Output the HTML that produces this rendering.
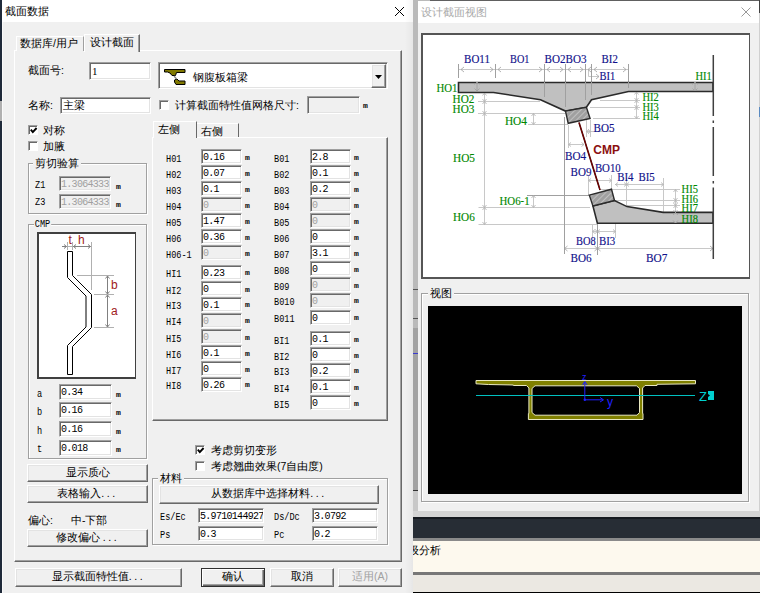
<!DOCTYPE html><html><head><meta charset="utf-8"><style>
*{margin:0;padding:0;box-sizing:border-box}
html,body{width:760px;height:593px;overflow:hidden;background:#f0f0f0;position:relative;font-family:"Liberation Sans",sans-serif;font-size:12px;color:#000}
.t{position:absolute;white-space:nowrap;line-height:16px;font-size:10.5px}
.lbl{position:absolute;white-space:nowrap;line-height:16px;font-family:"Liberation Mono",monospace;font-size:11px;transform:scaleX(0.78);transform-origin:0 0}
.edit{position:absolute;border-style:solid;border-width:1px;border-color:#a0a0a0 #fff #fff #a0a0a0;box-shadow:inset 1px 1px 0 #696969, inset -1px -1px 0 #e3e3e3;overflow:hidden;white-space:nowrap}
.edit>span{position:absolute;left:1px;top:1px}
.mono{font-family:"Liberation Mono",monospace;font-size:10px;letter-spacing:-0.7px}
.ui{font-size:10.5px}
.btn{position:absolute;font-size:10.5px;border-style:solid;border-width:1px;border-color:#fff #696969 #696969 #fff;box-shadow:inset -1px -1px 0 #a0a0a0, inset 1px 1px 0 #e3e3e3;background:#f0f0f0;text-align:center;white-space:nowrap}
.btn>span{position:absolute;left:0;right:0;top:50%;margin-top:-9.5px;line-height:16px}
.def{border-color:#303030;box-shadow:inset 1px 1px 0 #fff, inset -1px -1px 0 #696969, inset -2px -2px 0 #a0a0a0}
.chk{position:absolute;width:10px;height:10px;background:#fff;border-style:solid;border-width:1px;border-color:#a0a0a0 #fff #fff #a0a0a0;box-shadow:inset 1px 1px 0 #696969}
.grp{position:absolute;border:1px solid #a0a0a0;box-shadow:inset 1px 1px 0 #fff, 1px 1px 0 #fff}
.m{position:absolute;font-family:"Liberation Mono",monospace;font-weight:bold;font-size:8px;line-height:10px}
</style></head><body>
<div style="position:absolute;left:413px;top:0px;width:347px;height:593px;background:#bababa"></div>
<div style="position:absolute;left:413px;top:328px;width:5px;height:162px;background:#a2a2a2"></div>
<div style="position:absolute;left:413px;top:490px;width:5px;height:21px;background:#c8c8c8"></div>
<div style="position:absolute;left:413px;top:289px;width:5px;height:1px;background:#555"></div>
<div style="position:absolute;left:413px;top:318px;width:5px;height:1px;background:#555"></div>
<div style="position:absolute;left:413px;top:490px;width:5px;height:1px;background:#333"></div>
<div style="position:absolute;left:413px;top:353px;width:5px;height:1px;background:#3a3ad0"></div>
<div style="position:absolute;left:430px;top:0px;width:330px;height:1px;background:#606060"></div>
<div style="position:absolute;left:413px;top:511px;width:347px;height:6px;background:#d4d4d4"></div>
<div style="position:absolute;left:413px;top:517px;width:347px;height:21px;background:#272d35;border-top:2px solid #161a20"></div>
<div style="position:absolute;left:413px;top:538px;width:347px;height:3px;background:#8a8a8a"></div>
<div style="position:absolute;left:413px;top:541px;width:347px;height:31px;background:#fdf9ee"></div>
<div class="t" style="left:413px;top:542px;width:40px;overflow:hidden"><span style="margin-left:-5px">级分析</span></div>
<div style="position:absolute;left:413px;top:572px;width:347px;height:3px;background:#777"></div>
<div style="position:absolute;left:413px;top:575px;width:347px;height:17px;background:#ebe8e2"></div>
<div style="position:absolute;left:413px;top:592px;width:347px;height:1px;background:#000"></div>
<div style="position:absolute;left:0px;top:0px;width:2px;height:593px;background:#1f2a3a"></div>
<div style="position:absolute;left:0px;top:101px;width:2px;height:20px;background:#b0b0b0"></div>
<div style="position:absolute;left:2px;top:22px;width:1px;height:571px;background:#fafafa"></div>
<div style="position:absolute;left:2px;top:0px;width:411px;height:22px;background:#fff"></div>
<div style="position:absolute;left:2px;top:22px;width:411px;height:571px;background:#f0f0f0"></div>
<div style="position:absolute;left:405px;top:0px;width:8px;height:593px;background:linear-gradient(90deg,rgba(0,0,0,0),rgba(0,0,0,0.04))"></div>
<div style="position:absolute;left:2px;top:22px;width:1px;height:571px;background:#fafafa"></div>
<div class="t" style="left:5px;top:3px;">截面数据</div>
<svg style="position:absolute;left:394px;top:6px" width="11" height="11"><path d="M1 1 L10 10 M10 1 L1 10" stroke="#000" stroke-width="1"/></svg>
<div style="position:absolute;left:14px;top:50px;width:388px;height:512px;border-style:solid;border-width:1px;border-color:#fff #696969 #696969 #fff;box-shadow:inset -1px -1px 0 #a0a0a0"></div>
<div style="position:absolute;left:16px;top:36px;width:68px;height:15px;border-style:solid;border-width:1px 1px 0 1px;border-color:#fff #a0a0a0 #fff #fff;background:#f0f0f0"></div>
<div class="t" style="left:20px;top:35px;">数据库/用户</div>
<div style="position:absolute;left:84px;top:34px;width:56px;height:18px;border-style:solid;border-width:1px 1px 0 1px;border-color:#fff #696969 #fff #fff;box-shadow:inset -1px 0 0 #a0a0a0;background:#f0f0f0"></div>
<div class="t" style="left:90px;top:34px;">设计截面</div>
<div class="t" style="left:28px;top:62px;">截面号:</div>
<div class="edit" style="left:89px;top:62px;width:62px;height:18px;background:#fff"><span class="ui" style="color:#000;line-height:16px"><span style="font-family:Liberation Serif;font-size:11px;position:relative;left:1px;top:-1px">1</span></span></div>
<div class="edit" style="left:158px;top:62px;width:230px;height:27px;background:#fff"></div>
<div class="btn" style="left:371px;top:64px;width:15px;height:24px"></div>
<svg style="position:absolute;left:374.5px;top:74.5px" width="8" height="5"><path d="M0 0 L7 0 L3.5 4 Z" fill="#000"/></svg>
<svg style="position:absolute;left:0;top:0" width="200" height="100"><path d="M164.5 69.5 H185 V72.5 H176.5 L175.5 75.5 H172 L170 73 L167.5 72 H164.5 Z" fill="#807800" stroke="#000" stroke-width="1"/><path d="M174.5 80 L177 79 L179 81 H185 V84.5 H176 L174.5 82 Z" fill="#807800" stroke="#000" stroke-width="1"/><path d="M174 76 L176.5 79" stroke="#888" stroke-width="1.2"/></svg>
<div class="t" style="left:193px;top:69px;">钢腹板箱梁</div>
<div class="t" style="left:28px;top:97px;">名称:</div>
<div class="edit" style="left:60px;top:97px;width:91px;height:17px;background:#fff"><span class="ui" style="color:#000;line-height:15px"><span style="position:relative;left:1px;top:-1px">主梁</span></span></div>
<div class="chk" style="left:159px;top:100px"></div>
<div class="t" style="left:175px;top:97px;">计算截面特性值网格尺寸:</div>
<div class="edit" style="left:307px;top:96px;width:53px;height:18px;background:#f0f0f0"><span class="mono" style="color:#a0a0a0;line-height:16px"></span></div>
<div class="m" style="left:363px;top:101px">m</div>
<div class="chk" style="left:28px;top:125px"><svg width="10" height="10" style="position:absolute;left:0px;top:0px"><path d="M1.8 3.6 L3.8 6.1 L7.6 2" stroke="#000" stroke-width="1.9" fill="none"/></svg></div>
<div class="t" style="left:43px;top:122px;">对称</div>
<div class="chk" style="left:28px;top:141px"></div>
<div class="t" style="left:43px;top:138px;">加腋</div>
<div class="grp" style="left:28px;top:163px;width:119px;height:51px"></div>
<div class="t" style="left:33px;top:155px;padding:0 2px;background:#f0f0f0">剪切验算</div>
<div class="lbl" style="left:35px;top:177px">Z1</div>
<div class="edit" style="left:59px;top:176px;width:52px;height:15px;background:#f0f0f0"><span class="mono" style="color:#a0a0a0;line-height:13px">1.3064333</span></div>
<div class="m" style="left:116px;top:182px">m</div>
<div class="lbl" style="left:35px;top:194px">Z3</div>
<div class="edit" style="left:59px;top:194px;width:52px;height:15px;background:#f0f0f0"><span class="mono" style="color:#a0a0a0;line-height:13px">1.3064333</span></div>
<div class="m" style="left:116px;top:200px">m</div>
<div class="grp" style="left:28px;top:224px;width:119px;height:235px"></div>
<div class="t" style="left:33px;top:216px;padding:0 2px;background:#f0f0f0"></div>
<div class="lbl" style="left:34px;top:216px;background:#f0f0f0;padding:0 1px">CMP</div>
<div style="position:absolute;left:37px;top:232px;width:99px;height:147px;background:#fff;border-style:solid;border-width:2px 1px 2px 2px;border-color:#404040 #404040 #404040 #404040"></div>
<svg style="position:absolute;left:0;top:0" width="160" height="400">
<g stroke="#b0b0b0" stroke-width="1" fill="none">
<path d="M62 246.5 H91 M67.5 242 V250 M72.5 242 V250 M91.5 242 V290"/>
<path d="M77 275.5 H114 M94 294.5 H114 M94 327.5 H114 M107.5 275 V328"/>
</g>
<g stroke="#808080" stroke-width="1" fill="none">
<path d="M62 246.5 L66 246.5 M73 246.5 L90 246.5"/>
<path d="M107.5 276 V294 M107.5 295 V327"/>
<path d="M64 244.5 L66.5 246.5 L64 248.5 M76 244.5 L73.5 246.5 L76 248.5 M88 244.5 L90.5 246.5 L88 248.5 M105.5 278.5 L107.5 276 L109.5 278.5 M105.5 291.5 L107.5 294 L109.5 291.5 M105.5 297.5 L107.5 295 L109.5 297.5 M105.5 324.5 L107.5 327 L109.5 324.5"/>
</g>
<path d="M67.5 251.5 H72.5 V275.5 L91.5 294.5 V327.5 L72.5 346.5 V374.5 H67.5 V345.5 L86 327 V296 L67.5 277.5 Z" fill="#fff" stroke="#000" stroke-width="1"/>
<g fill="#a02020" font-family="Liberation Sans" font-size="12">
<text x="68.5" y="244">t</text><text x="78" y="244">h</text>
<text x="111" y="289">b</text><text x="111" y="315">a</text>
</g>
</svg>
<div class="lbl" style="left:37px;top:385.6px">a</div>
<div class="edit" style="left:59px;top:384px;width:53px;height:16px;background:#fff"><span class="mono" style="color:#000;line-height:14px">0.34</span></div>
<div class="m" style="left:116px;top:389.6px">m</div>
<div class="lbl" style="left:37px;top:403.7px">b</div>
<div class="edit" style="left:59px;top:402px;width:53px;height:16px;background:#fff"><span class="mono" style="color:#000;line-height:14px">0.16</span></div>
<div class="m" style="left:116px;top:407.7px">m</div>
<div class="lbl" style="left:37px;top:422.5px">h</div>
<div class="edit" style="left:59px;top:421px;width:53px;height:16px;background:#fff"><span class="mono" style="color:#000;line-height:14px">0.16</span></div>
<div class="m" style="left:116px;top:426.5px">m</div>
<div class="lbl" style="left:37px;top:441.3px">t</div>
<div class="edit" style="left:59px;top:440px;width:53px;height:16px;background:#fff"><span class="mono" style="color:#000;line-height:14px">0.018</span></div>
<div class="m" style="left:116px;top:445.3px">m</div>
<div class="btn" style="left:27px;top:464px;width:121px;height:18px;"><span>显示质心</span></div>
<div class="btn" style="left:27px;top:485px;width:121px;height:18px;"><span>表格输入<span style="letter-spacing:2.5px">...</span></span></div>
<div class="t" style="left:28px;top:512px;">偏心:</div>
<div class="t" style="left:71px;top:512px;">中-下部</div>
<div class="btn" style="left:27px;top:529px;width:121px;height:18px;"><span>修改偏心 <span style="letter-spacing:2.5px">...</span></span></div>
<div style="position:absolute;left:152px;top:137px;width:236px;height:284px;border-style:solid;border-width:1px;border-color:#fff #696969 #696969 #fff;box-shadow:inset -1px -1px 0 #a0a0a0"></div>
<div style="position:absolute;left:153px;top:121px;width:44px;height:17px;border-style:solid;border-width:1px 1px 0 1px;border-color:#fff #696969 #fff #fff;background:#f0f0f0"></div>
<div class="t" style="left:158px;top:121px;">左侧</div>
<div style="position:absolute;left:197px;top:123px;width:42px;height:14px;border-style:solid;border-width:1px 1px 0 0;border-color:#fff #696969 #fff #fff;background:#f0f0f0"></div>
<div class="t" style="left:201px;top:123px;">右侧</div>
<div class="lbl" style="left:166px;top:150.7px">H01</div>
<div class="edit" style="left:201px;top:149px;width:41px;height:15px;background:#fff"><span class="mono" style="color:#000;line-height:13px">0.16</span></div>
<div class="m" style="left:245px;top:152.7px">m</div>
<div class="lbl" style="left:166px;top:166.5px">H02</div>
<div class="edit" style="left:201px;top:165px;width:41px;height:15px;background:#fff"><span class="mono" style="color:#000;line-height:13px">0.07</span></div>
<div class="m" style="left:245px;top:168.5px">m</div>
<div class="lbl" style="left:166px;top:182.6px">H03</div>
<div class="edit" style="left:201px;top:181px;width:41px;height:15px;background:#fff"><span class="mono" style="color:#000;line-height:13px">0.1</span></div>
<div class="m" style="left:245px;top:184.6px">m</div>
<div class="lbl" style="left:166px;top:198.7px">H04</div>
<div class="edit" style="left:201px;top:197px;width:41px;height:15px;background:#f0f0f0"><span class="mono" style="color:#a0a0a0;line-height:13px">0</span></div>
<div class="m" style="left:245px;top:200.7px">m</div>
<div class="lbl" style="left:166px;top:214.5px">H05</div>
<div class="edit" style="left:201px;top:213px;width:41px;height:15px;background:#fff"><span class="mono" style="color:#000;line-height:13px">1.47</span></div>
<div class="m" style="left:245px;top:216.5px">m</div>
<div class="lbl" style="left:166px;top:230.6px">H06</div>
<div class="edit" style="left:201px;top:229px;width:41px;height:15px;background:#fff"><span class="mono" style="color:#000;line-height:13px">0.36</span></div>
<div class="m" style="left:245px;top:232.6px">m</div>
<div class="lbl" style="left:166px;top:246.6px">H06-1</div>
<div class="edit" style="left:201px;top:245px;width:41px;height:15px;background:#f0f0f0"><span class="mono" style="color:#a0a0a0;line-height:13px">0</span></div>
<div class="m" style="left:245px;top:248.6px">m</div>
<div class="lbl" style="left:166px;top:266.2px">HI1</div>
<div class="edit" style="left:201px;top:265px;width:41px;height:15px;background:#fff"><span class="mono" style="color:#000;line-height:13px">0.23</span></div>
<div class="m" style="left:245px;top:268.2px">m</div>
<div class="lbl" style="left:166px;top:282.6px">HI2</div>
<div class="edit" style="left:201px;top:281px;width:41px;height:15px;background:#fff"><span class="mono" style="color:#000;line-height:13px">0</span></div>
<div class="m" style="left:245px;top:284.6px">m</div>
<div class="lbl" style="left:166px;top:298.4px">HI3</div>
<div class="edit" style="left:201px;top:297px;width:41px;height:15px;background:#fff"><span class="mono" style="color:#000;line-height:13px">0.1</span></div>
<div class="m" style="left:245px;top:300.4px">m</div>
<div class="lbl" style="left:166px;top:314.4px">HI4</div>
<div class="edit" style="left:201px;top:313px;width:41px;height:15px;background:#f0f0f0"><span class="mono" style="color:#a0a0a0;line-height:13px">0</span></div>
<div class="m" style="left:245px;top:316.4px">m</div>
<div class="lbl" style="left:166px;top:330.5px">HI5</div>
<div class="edit" style="left:201px;top:329px;width:41px;height:15px;background:#f0f0f0"><span class="mono" style="color:#a0a0a0;line-height:13px">0</span></div>
<div class="m" style="left:245px;top:332.5px">m</div>
<div class="lbl" style="left:166px;top:346.6px">HI6</div>
<div class="edit" style="left:201px;top:345px;width:41px;height:15px;background:#fff"><span class="mono" style="color:#000;line-height:13px">0.1</span></div>
<div class="m" style="left:245px;top:348.6px">m</div>
<div class="lbl" style="left:166px;top:362.7px">HI7</div>
<div class="edit" style="left:201px;top:361px;width:41px;height:15px;background:#fff"><span class="mono" style="color:#000;line-height:13px">0</span></div>
<div class="m" style="left:245px;top:364.7px">m</div>
<div class="lbl" style="left:166px;top:378.3px">HI8</div>
<div class="edit" style="left:201px;top:377px;width:41px;height:15px;background:#fff"><span class="mono" style="color:#000;line-height:13px">0.26</span></div>
<div class="m" style="left:245px;top:380.3px">m</div>
<div class="lbl" style="left:274px;top:150.7px">B01</div>
<div class="edit" style="left:310px;top:149px;width:41px;height:15px;background:#fff"><span class="mono" style="color:#000;line-height:13px">2.8</span></div>
<div class="m" style="left:354px;top:152.7px">m</div>
<div class="lbl" style="left:274px;top:166.5px">B02</div>
<div class="edit" style="left:310px;top:165px;width:41px;height:15px;background:#fff"><span class="mono" style="color:#000;line-height:13px">0.1</span></div>
<div class="m" style="left:354px;top:168.5px">m</div>
<div class="lbl" style="left:274px;top:182.6px">B03</div>
<div class="edit" style="left:310px;top:181px;width:41px;height:15px;background:#fff"><span class="mono" style="color:#000;line-height:13px">0.2</span></div>
<div class="m" style="left:354px;top:184.6px">m</div>
<div class="lbl" style="left:274px;top:198.7px">B04</div>
<div class="edit" style="left:310px;top:197px;width:41px;height:15px;background:#f0f0f0"><span class="mono" style="color:#a0a0a0;line-height:13px">0</span></div>
<div class="m" style="left:354px;top:200.7px">m</div>
<div class="lbl" style="left:274px;top:214.5px">B05</div>
<div class="edit" style="left:310px;top:213px;width:41px;height:15px;background:#f0f0f0"><span class="mono" style="color:#a0a0a0;line-height:13px">0</span></div>
<div class="m" style="left:354px;top:216.5px">m</div>
<div class="lbl" style="left:274px;top:230.6px">B06</div>
<div class="edit" style="left:310px;top:229px;width:41px;height:15px;background:#fff"><span class="mono" style="color:#000;line-height:13px">0</span></div>
<div class="m" style="left:354px;top:232.6px">m</div>
<div class="lbl" style="left:274px;top:246.6px">B07</div>
<div class="edit" style="left:310px;top:245px;width:41px;height:15px;background:#fff"><span class="mono" style="color:#000;line-height:13px">3.1</span></div>
<div class="m" style="left:354px;top:248.6px">m</div>
<div class="lbl" style="left:274px;top:262.5px">B08</div>
<div class="edit" style="left:310px;top:261px;width:41px;height:15px;background:#fff"><span class="mono" style="color:#000;line-height:13px">0</span></div>
<div class="m" style="left:354px;top:264.5px">m</div>
<div class="lbl" style="left:274px;top:278.5px">B09</div>
<div class="edit" style="left:310px;top:277px;width:41px;height:15px;background:#f0f0f0"><span class="mono" style="color:#a0a0a0;line-height:13px">0</span></div>
<div class="m" style="left:354px;top:280.5px">m</div>
<div class="lbl" style="left:274px;top:294.4px">B010</div>
<div class="edit" style="left:310px;top:293px;width:41px;height:15px;background:#f0f0f0"><span class="mono" style="color:#a0a0a0;line-height:13px">0</span></div>
<div class="m" style="left:354px;top:296.4px">m</div>
<div class="lbl" style="left:274px;top:311px">B011</div>
<div class="edit" style="left:310px;top:310px;width:41px;height:15px;background:#fff"><span class="mono" style="color:#000;line-height:13px">0</span></div>
<div class="m" style="left:354px;top:313px">m</div>
<div class="lbl" style="left:274px;top:332.6px">BI1</div>
<div class="edit" style="left:310px;top:331px;width:41px;height:15px;background:#fff"><span class="mono" style="color:#000;line-height:13px">0.1</span></div>
<div class="m" style="left:354px;top:334.6px">m</div>
<div class="lbl" style="left:274px;top:348.6px">BI2</div>
<div class="edit" style="left:310px;top:347px;width:41px;height:15px;background:#fff"><span class="mono" style="color:#000;line-height:13px">0</span></div>
<div class="m" style="left:354px;top:350.6px">m</div>
<div class="lbl" style="left:274px;top:364.4px">BI3</div>
<div class="edit" style="left:310px;top:363px;width:41px;height:15px;background:#fff"><span class="mono" style="color:#000;line-height:13px">0.2</span></div>
<div class="m" style="left:354px;top:366.4px">m</div>
<div class="lbl" style="left:274px;top:380.8px">BI4</div>
<div class="edit" style="left:310px;top:379px;width:41px;height:15px;background:#fff"><span class="mono" style="color:#000;line-height:13px">0.1</span></div>
<div class="m" style="left:354px;top:382.8px">m</div>
<div class="lbl" style="left:274px;top:396.9px">BI5</div>
<div class="edit" style="left:310px;top:395px;width:41px;height:15px;background:#fff"><span class="mono" style="color:#000;line-height:13px">0</span></div>
<div class="m" style="left:354px;top:398.9px">m</div>
<div class="chk" style="left:195px;top:445px"><svg width="10" height="10" style="position:absolute;left:0px;top:0px"><path d="M1.8 3.6 L3.8 6.1 L7.6 2" stroke="#000" stroke-width="1.9" fill="none"/></svg></div>
<div class="t" style="left:211px;top:442px;">考虑剪切变形</div>
<div class="chk" style="left:195px;top:461px"></div>
<div class="t" style="left:211px;top:458px;">考虑翘曲效果(7自由度)</div>
<div class="grp" style="left:152px;top:478px;width:236px;height:67px"></div>
<div class="t" style="left:158px;top:470px;padding:0 2px;background:#f0f0f0">材料</div>
<div class="btn" style="left:159px;top:485px;width:220px;height:19px;"><span>从数据库中选择材料<span style="letter-spacing:2.5px">...</span></span></div>
<div class="lbl" style="left:160px;top:509px">Es/Ec</div>
<div class="edit" style="left:198px;top:508px;width:66px;height:15px;background:#fff"><span class="mono" style="color:#000;line-height:13px">5.9710144927</span></div>
<div class="lbl" style="left:274px;top:509px">Ds/Dc</div>
<div class="edit" style="left:312px;top:508px;width:66px;height:15px;background:#fff"><span class="mono" style="color:#000;line-height:13px">3.0792</span></div>
<div class="lbl" style="left:160px;top:527px">Ps</div>
<div class="edit" style="left:198px;top:526px;width:66px;height:15px;background:#fff"><span class="mono" style="color:#000;line-height:13px">0.3</span></div>
<div class="lbl" style="left:274px;top:527px">Pc</div>
<div class="edit" style="left:312px;top:526px;width:66px;height:15px;background:#fff"><span class="mono" style="color:#000;line-height:13px">0.2</span></div>
<div class="btn" style="left:15px;top:568px;width:167px;height:19px;"><span>显示截面特性值<span style="letter-spacing:2.5px">...</span></span></div>
<div class="btn def" style="left:201px;top:568px;width:64px;height:19px;"><span>确认</span></div>
<div class="btn" style="left:270px;top:568px;width:64px;height:19px;"><span>取消</span></div>
<div class="btn" style="left:338px;top:568px;width:64px;height:19px;"><span><span style="color:#a0a0a0">适用(A)</span></span></div>
<div style="position:absolute;left:418px;top:1px;width:341px;height:510px;background:#f0f0f0"></div>
<div style="position:absolute;left:759px;top:0px;width:1px;height:511px;background:#d0d0d0"></div>
<div style="position:absolute;left:759px;top:0px;width:1px;height:13px;background:#404040"></div>
<div style="position:absolute;left:759px;top:107px;width:1px;height:10px;background:#5a8ac0"></div>
<div style="position:absolute;left:418px;top:1px;width:341px;height:22px;background:#fff"></div>
<div class="t" style="left:421px;top:4px;"><span style="color:#a8a8a8">设计截面视图</span></div>
<svg style="position:absolute;left:741px;top:7px" width="10" height="10"><path d="M0.5 0.5 L9.5 9.5 M9.5 0.5 L0.5 9.5" stroke="#999" stroke-width="1"/></svg>
<div style="position:absolute;left:421px;top:33px;width:329px;height:246px;background:#fff;border-style:solid;border-width:2px 1px 2px 2px;border-color:#555"></div>
<svg style="position:absolute;left:0;top:0" width="760" height="300" viewBox="0 0 760 300">
<defs><pattern id="hatch" patternUnits="userSpaceOnUse" width="4" height="4" patternTransform="rotate(45)"><rect width="4" height="4" fill="#a0a0a0"/><line x1="0" y1="0" x2="0" y2="4" stroke="#d0d0d0" stroke-width="1.3"/></pattern></defs>
<g stroke="#c8c8c8" stroke-width="1" fill="none">
<path d="M458.5 69.5 H628.5"/>
<path d="M478 101.5 H540 M478 113.5 H566 M528 124.5 H568"/>
<path d="M484.5 93 V224"/>
<path d="M478.5 207.5 H590 M478.5 224.5 H597"/>
<path d="M533.5 113 V124 M533.5 195 V207"/>
<path d="M568.5 125 V148 M568.5 144.5 H584"/>
<path d="M586.5 120 V137 M590.5 120 V137 M586 131.5 H614"/>
<path d="M588.5 175 V195 M611.5 175 V190 M588 180.5 H611"/>
<path d="M615 184.5 H663.5 M626.5 178 V207 M663.5 178 V212"/>
<path d="M600 100.5 H640 M590 107.5 H640 M593 118.5 H640 M636.5 92 V118"/>
<path d="M600 189.5 H680 M614 200.5 H680 M626 205.5 H680 M675.5 189 V223"/>
<path d="M592.5 231.5 H615 M592.5 224 V238 M615.5 224 V238"/>
<path d="M564.5 248.5 H713"/>
<path d="M588.5 69 V76.5 H599"/>
</g>
<g stroke="#a0a0a0" stroke-width="1" fill="none">
<path d="M458.5 64 V78 M495.5 64 V78 M544.5 64 V97 M565.5 64 V107 M585.5 64 V100 M591.5 64 V95 M628.5 64 V88"/>
<path d="M527 195.5 H589"/>
<path d="M564.5 117 V254 M597.5 224 V255"/>
</g>
<path d="M458.5 82.5 H713 V91.5 H628.5 L591.5 99.7 L586.4 107.3 L565.5 111.1 L540.5 99.7 L493.5 92.5 H458.5 Z" fill="#c0c0c0" stroke="#2a2a2a" stroke-width="1.6"/>
<path d="M544.5 82 V97 M565.5 82 V107 M585.5 82 V100 M591.5 82 V95 M628.5 82 V88" stroke="#a0a0a0" stroke-width="1"/>
<path d="M565.5 111.1 L586.4 107.3 L590.1 118.5 L568.2 123.3 Z" fill="url(#hatch)" stroke="#2a2a2a" stroke-width="1.4"/>
<path d="M579 122.5 L600 190" stroke="#300000" stroke-width="1.6"/>
<path d="M579 122.5 L600 190" stroke="#900000" stroke-width="0.8"/>
<path d="M592.9 205.9 L614.5 200.5 L627 206.6 L663.2 212.4 H713 V223.3 H597.4 Z" fill="#c0c0c0" stroke="#2a2a2a" stroke-width="1.6"/>
<path d="M589.3 195.1 L611.5 189.2 L614.5 200.5 L592.9 205.9 Z" fill="url(#hatch)" stroke="#2a2a2a" stroke-width="1.4"/>
<g stroke="#a0a0a0" stroke-width="0.8" fill="none">
<path d="M464 67 L461 69.5 L464 72"/>
<path d="M501 67 L498 69.5 L501 72"/>
<path d="M550 67 L547 69.5 L550 72"/>
<path d="M571 67 L568 69.5 L571 72"/>
<path d="M591 67 L588 69.5 L591 72"/>
<path d="M597 67 L594 69.5 L597 72"/>
<path d="M490 67 L493 69.5 L490 72"/>
<path d="M539 67 L542 69.5 L539 72"/>
<path d="M560 67 L563 69.5 L560 72"/>
<path d="M580 67 L583 69.5 L580 72"/>
<path d="M623 67 L626 69.5 L623 72"/>
<path d="M596 74 L599 76.5 L596 79"/>
<path d="M474.5 84.5 L477 82 L479.5 84.5 M477 82 V91 M474.5 88.5 L477 91 L479.5 88.5"/>
<path d="M692.5 84.5 L695 82 L697.5 84.5 M695 82 V91 M692.5 88.5 L695 91 L697.5 88.5"/>
<path d="M673 215 L675.5 212.5 L678 215 M673 220.5 L675.5 223 L678 220.5"/>
<path d="M710 246 L713 248.5 L710 251 M567.5 246 L564.5 248.5 L567.5 251 M594.5 246 L597.5 248.5 L594.5 251 M600.5 246 L597.5 248.5 L600.5 251"/>
</g>
<path d="M482.5 95.5 L484.5 93 L486.5 95.5 M482.5 99.0 L484.5 101.5 L486.5 99.0 M482.5 104.0 L484.5 101.5 L486.5 104.0 M482.5 111.0 L484.5 113.5 L486.5 111.0 M482.5 116.0 L484.5 113.5 L486.5 116.0 M482.5 205.0 L484.5 207.5 L486.5 205.0 M482.5 210.0 L484.5 207.5 L486.5 210.0 M482.5 222.0 L484.5 224.5 L486.5 222.0 M634.5 94.5 L636.5 92 L638.5 94.5 M634.5 98.0 L636.5 100.5 L638.5 98.0 M634.5 103.0 L636.5 100.5 L638.5 103.0 M634.5 105.0 L636.5 107.5 L638.5 105.0 M634.5 110.0 L636.5 107.5 L638.5 110.0 M634.5 116.0 L636.5 118.5 L638.5 116.0 M673.5 192.0 L675.5 189.5 L677.5 192.0 M673.5 198.0 L675.5 200.5 L677.5 198.0 M673.5 203.0 L675.5 200.5 L677.5 203.0 M673.5 203.0 L675.5 205.5 L677.5 203.0 M673.5 208.0 L675.5 205.5 L677.5 208.0 M673.5 210.0 L675.5 212.5 L677.5 210.0 M673.5 215.0 L675.5 212.5 L677.5 215.0 M673.5 220.5 L675.5 223 L677.5 220.5 M531.5 116.0 L533.5 113.5 L535.5 116.0 M531.5 122.0 L533.5 124.5 L535.5 122.0 M531.5 198.0 L533.5 195.5 L535.5 198.0 M531.5 205.0 L533.5 207.5 L535.5 205.0 M589.0 129.5 L586.5 131.5 L589.0 133.5 M588.0 129.5 L590.5 131.5 L588.0 133.5 M571.0 142.5 L568.5 144.5 L571.0 146.5 M581.5 142.5 L584 144.5 L581.5 146.5 M591.0 178.5 L588.5 180.5 L591.0 182.5 M609.0 178.5 L611.5 180.5 L609.0 182.5 M618.0 182.5 L615.5 184.5 L618.0 186.5 M624.0 182.5 L626.5 184.5 L624.0 186.5 M629.0 182.5 L626.5 184.5 L629.0 186.5 M661.0 182.5 L663.5 184.5 L661.0 186.5 M595.0 229.5 L592.5 231.5 L595.0 233.5 M595.0 229.5 L597.5 231.5 L595.0 233.5 M600.0 229.5 L597.5 231.5 L600.0 233.5 M613.0 229.5 L615.5 231.5 L613.0 233.5" stroke="#b0b0b0" stroke-width="0.8" fill="none"/>
<path d="M713.3 55 V116 M713.3 120.5 V123 M713.3 127 V176 M713.3 181 V183.5 M713.3 187.5 V259" stroke="#404040" stroke-width="1.5"/>
<g font-family="Liberation Serif" font-size="13" fill="#10108a" stroke="#10108a" stroke-width="0.15">
<text x="464.1" y="63" textLength="25.8" lengthAdjust="spacingAndGlyphs">BO11</text>
<text x="510.1" y="63" textLength="19.3" lengthAdjust="spacingAndGlyphs">BO1</text>
<text x="544.6" y="63" textLength="42.0" lengthAdjust="spacingAndGlyphs">BO2BO3</text>
<text x="601.6" y="63" textLength="16.3" lengthAdjust="spacingAndGlyphs">BI2</text>
<text x="599.6" y="80" textLength="15.700000000000001" lengthAdjust="spacingAndGlyphs">BI1</text>
<text x="593.6" y="131.5" textLength="21.0" lengthAdjust="spacingAndGlyphs">BO5</text>
<text x="565.1" y="159.5" textLength="21.1" lengthAdjust="spacingAndGlyphs">BO4</text>
<text x="570.6" y="175.5" textLength="20.8" lengthAdjust="spacingAndGlyphs">BO9</text>
<text x="594.9" y="171.5" textLength="25.8" lengthAdjust="spacingAndGlyphs">BO10</text>
<text x="617.2" y="180.5" textLength="16.3" lengthAdjust="spacingAndGlyphs">BI4</text>
<text x="638.5" y="180.5" textLength="16.3" lengthAdjust="spacingAndGlyphs">BI5</text>
<text x="576.0" y="244.5" textLength="19.7" lengthAdjust="spacingAndGlyphs">BO8</text>
<text x="599.0" y="244.5" textLength="16.3" lengthAdjust="spacingAndGlyphs">BI3</text>
<text x="570.6" y="262" textLength="21.1" lengthAdjust="spacingAndGlyphs">BO6</text>
<text x="646.0" y="262" textLength="21.400000000000002" lengthAdjust="spacingAndGlyphs">BO7</text>
</g>
<g font-family="Liberation Serif" font-size="13" fill="#008800" stroke="#008800" stroke-width="0.15">
<text x="436.5" y="91.5" textLength="21.0" lengthAdjust="spacingAndGlyphs">HO1</text>
<text x="452.6" y="103" textLength="21.8" lengthAdjust="spacingAndGlyphs">HO2</text>
<text x="452.6" y="112.5" textLength="21.8" lengthAdjust="spacingAndGlyphs">HO3</text>
<text x="504.90000000000003" y="124.5" textLength="22.1" lengthAdjust="spacingAndGlyphs">HO4</text>
<text x="453.0" y="162.2" textLength="22.0" lengthAdjust="spacingAndGlyphs">HO5</text>
<text x="499.5" y="205" textLength="30.1" lengthAdjust="spacingAndGlyphs">HO6-1</text>
<text x="453.0" y="220.5" textLength="21.8" lengthAdjust="spacingAndGlyphs">HO6</text>
<text x="695.4" y="80" textLength="16.3" lengthAdjust="spacingAndGlyphs">HI1</text>
<text x="642.4" y="101" textLength="16.3" lengthAdjust="spacingAndGlyphs">HI2</text>
<text x="642.4" y="110.5" textLength="16.3" lengthAdjust="spacingAndGlyphs">HI3</text>
<text x="642.4" y="119.5" textLength="16.3" lengthAdjust="spacingAndGlyphs">HI4</text>
<text x="681.6" y="193" textLength="16.3" lengthAdjust="spacingAndGlyphs">HI5</text>
<text x="681.6" y="202.5" textLength="16.3" lengthAdjust="spacingAndGlyphs">HI6</text>
<text x="681.6" y="211.5" textLength="16.3" lengthAdjust="spacingAndGlyphs">HI7</text>
<text x="681.6" y="223" textLength="16.3" lengthAdjust="spacingAndGlyphs">HI8</text>
</g>
<text x="593.3" y="154" font-family="Liberation Sans" font-weight="bold" font-size="12" fill="#8b1010">CMP</text>
</svg>
<div class="grp" style="left:421px;top:293px;width:328px;height:209px"></div>
<div class="t" style="left:428px;top:285px;padding:0 2px;background:#f0f0f0">视图</div>
<div style="position:absolute;left:428px;top:306px;width:314px;height:188px;background:#000"></div>
<svg style="position:absolute;left:0;top:0" width="760" height="520" viewBox="0 0 760 520">
<path d="M476 380.5 H695.5 V383.8 L657 384.3 V385.5 H645 L642.6 388 V413.5 H643 V419.5 H528.4 V413.5 H528.9 V388 L526.5 385.5 H513.4 V385 L488.4 384.5 L476 383.8 Z" fill="#808000" stroke="#e8e8c0" stroke-width="1"/>
<path d="M535 385.8 H636.5 L639.5 388.5 V412.5 L637 415.2 H535 L532 412.5 V388.5 Z" fill="#000" stroke="#e8e8c0" stroke-width="1"/>
<path d="M476 395.5 H695" stroke="#00c0c0" stroke-width="1.2"/>
<text x="699" y="400.5" font-family="Liberation Sans" font-size="13" fill="#00d0d0">Z</text>
<path d="M708 391 H714 V400 H708 V397 L710 395.5 L708 394 Z" fill="#00d0d0"/>
<path d="M584.8 399.8 V382 M582.5 385 L584.8 381.5 L587 385 M584.8 399.8 H603 M600 397.5 L603.5 399.8 L600 402" stroke="#2020ff" stroke-width="1" fill="none"/>
<circle cx="584.8" cy="399.8" r="1.2" fill="#2020ff"/>
<text x="582" y="380" font-family="Liberation Sans" font-size="9" fill="#2020ff">z</text>
<text x="607" y="405.5" font-family="Liberation Sans" font-size="12" fill="#2020ff">y</text>
</svg>
</body></html>
